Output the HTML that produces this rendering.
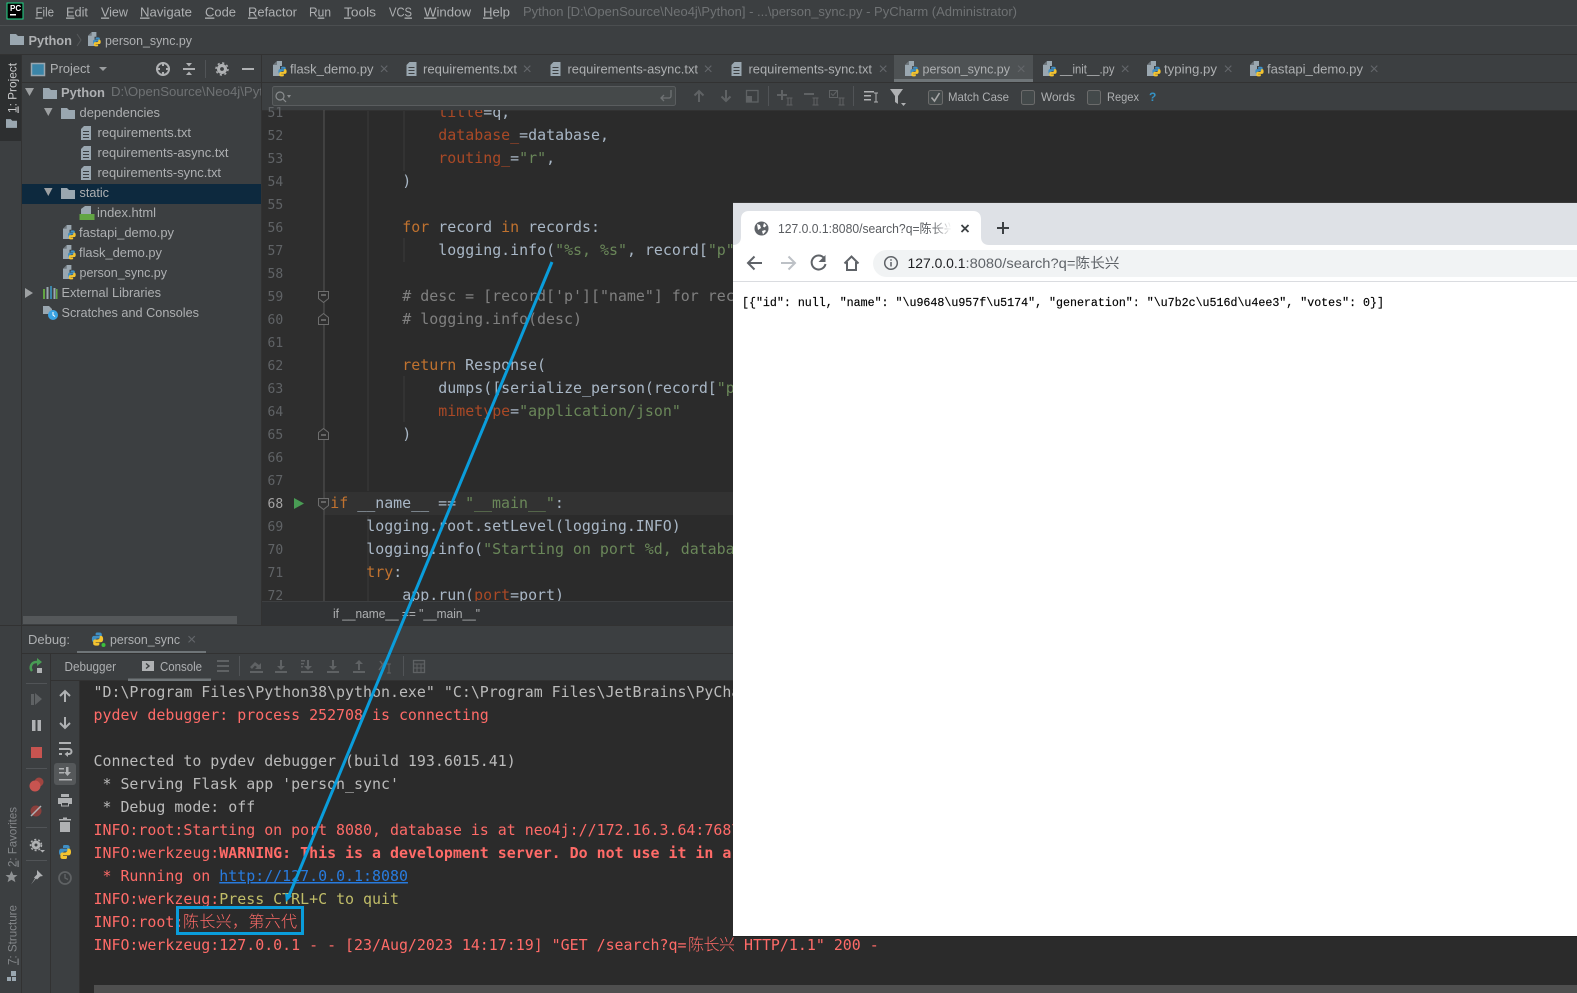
<!DOCTYPE html>
<html lang="en"><head><meta charset="utf-8"><title>PyCharm</title>
<style>
html,body{margin:0;padding:0;background:#3c3f41;width:1577px;height:993px;overflow:hidden}
svg{display:block}
text{white-space:pre}
.u{font:13px "Liberation Sans","Noto Sans CJK SC",sans-serif;fill:#aeb0b2}
.b{font-weight:bold}
.x{font:16px "Liberation Sans",sans-serif;fill:#63666a}
.m{font:14.93px "DejaVu Sans Mono","Liberation Mono","Noto Sans CJK SC",monospace;fill:#a9b7c6}
.n{font:13px "DejaVu Sans Mono","Liberation Mono",monospace;fill:#606366}
.k{fill:#c0722f}.s{fill:#6a8759}.p{fill:#aa4926}.c{fill:#808080}
.w{fill:#bbbbbb}.r{fill:#ff6b68}.y{fill:#c1bd68}.l{fill:#287bde;text-decoration:underline}
.cjk{font:300 16px "Noto Sans CJK SC","WenQuanYi Zen Hei",sans-serif;fill:#ff6b68}
.uu{text-decoration:underline}
.ic{fill:none;stroke:#afb1b3;stroke-width:2}
.dis{fill:none;stroke:#5f6264;stroke-width:2}
</style></head><body>
<svg width="1577" height="993" viewBox="0 0 1577 993" xmlns="http://www.w3.org/2000/svg">
<defs>
<symbol id="py" viewBox="0 0 16 16" overflow="visible"><path fill="#3f8fc4" d="M7.900 1C5.900 1 6 2 6 2.900V4h4v.6H4.400C3.200 4.600 2 5.400 2 8c0 2.600 1.100 3.400 2.200 3.400H5.600V9.700c0-1.200 1-2.200 2.200-2.200h3c1 0 1.800-.8 1.800-1.800V2.900C12.600 1.900 11.800 1 10 1Z"/><path fill="#f4c430" transform="rotate(180 8 8)" d="M7.900 1C5.900 1 6 2 6 2.900V4h4v.6H4.400C3.200 4.600 2 5.400 2 8c0 2.600 1.100 3.400 2.200 3.400H5.600V9.700c0-1.200 1-2.200 2.200-2.200h3c1 0 1.800-.8 1.800-1.800V2.900C12.600 1.900 11.800 1 10 1Z"/></symbol>
<symbol id="pf" viewBox="0 0 15 16" overflow="visible"><path fill="#9aa7b0" d="M0 4L4 0h5v5H7v10H0z"/><path fill="#3c3f41" d="M4 0v4H0z" opacity=".45"/><svg x="4" y="5" width="11" height="11" viewBox="0 0 16 16"><use href="#py" width="16" height="16"/></svg></symbol>
<symbol id="tf" viewBox="0 0 10 14" overflow="visible"><path fill="#9aa7b0" d="M0 3L3 0h7v14H0z"/><path stroke="#3c3f41" stroke-width="1" d="M2 5.500h6M2 8.500h6M2 11.500h6"/></symbol>
<symbol id="fd" viewBox="0 0 14 11" overflow="visible"><path fill="#9aa7b0" d="M0 0h6l2 2h6v9H0z"/></symbol>
</defs>

<!-- base -->
<rect width="1577" height="993" fill="#3c3f41"/>
<rect y="25" width="1577" height="1" fill="#4b4e50"/>
<rect y="54" width="1577" height="1" fill="#323232"/>

<!-- title -->
<rect x="7" y="3" width="16" height="16" fill="#000" stroke="#21d789" stroke-width="1"/>
<text x="10" y="11" style="font:bold 8px 'Liberation Sans',sans-serif;fill:#fff">PC</text><rect x="10" y="14" width="6" height="1.500" fill="#fff"/>
<text class="u" x="35.500" y="16.500" textLength="18.500" lengthAdjust="spacingAndGlyphs"><tspan class="uu">F</tspan>ile</text>
<text class="u" x="66" y="16.500" textLength="22" lengthAdjust="spacingAndGlyphs"><tspan class="uu">E</tspan>dit</text>
<text class="u" x="101" y="16.500" textLength="27" lengthAdjust="spacingAndGlyphs"><tspan class="uu">V</tspan>iew</text>
<text class="u" x="140" y="16.500" textLength="52" lengthAdjust="spacingAndGlyphs"><tspan class="uu">N</tspan>avigate</text>
<text class="u" x="205" y="16.500" textLength="31" lengthAdjust="spacingAndGlyphs"><tspan class="uu">C</tspan>ode</text>
<text class="u" x="248" y="16.500" textLength="49" lengthAdjust="spacingAndGlyphs"><tspan class="uu">R</tspan>efactor</text>
<text class="u" x="309" y="16.500" textLength="22" lengthAdjust="spacingAndGlyphs">R<tspan class="uu">u</tspan>n</text>
<text class="u" x="344" y="16.500" textLength="32" lengthAdjust="spacingAndGlyphs"><tspan class="uu">T</tspan>ools</text>
<text class="u" x="389" y="16.500" textLength="23" lengthAdjust="spacingAndGlyphs">VC<tspan class="uu">S</tspan></text>
<text class="u" x="424" y="16.500" textLength="47" lengthAdjust="spacingAndGlyphs"><tspan class="uu">W</tspan>indow</text>
<text class="u" x="483" y="16.500" textLength="27" lengthAdjust="spacingAndGlyphs"><tspan class="uu">H</tspan>elp</text>
<text class="u" x="523" y="16" textLength="494" lengthAdjust="spacingAndGlyphs" style="fill:#6f7274">Python [D:\OpenSource\Neo4j\Python] - ...\person_sync.py - PyCharm (Administrator)</text>

<!-- nav -->
<use href="#fd" x="10" y="34" width="14" height="11"/>
<text class="u b" x="28.500" y="45" textLength="43.500" lengthAdjust="spacingAndGlyphs">Python</text>
<path d="M77 34l4 6-4 6" fill="none" stroke="#55585a"/>
<use href="#pf" x="88" y="32" width="14" height="15"/>
<text class="u" x="105" y="45" textLength="87" lengthAdjust="spacingAndGlyphs">person_sync.py</text>

<!-- left strip -->
<rect x="0" y="55" width="21" height="86" fill="#2d2f30"/>
<rect x="21" y="55" width="1" height="938" fill="#323232"/>
<text class="u" transform="translate(16.500,113) rotate(-90)" textLength="50" lengthAdjust="spacingAndGlyphs" style="font-size:12px;fill:#c8c9ca"><tspan class="uu">1</tspan>: Project</text>
<use href="#fd" x="6" y="119" width="11" height="9"/>
<text class="u" transform="translate(16.500,867) rotate(-90)" textLength="60" lengthAdjust="spacingAndGlyphs" style="font-size:12px;fill:#84878a"><tspan class="uu">2</tspan>: Favorites</text>
<path fill="#8f9294" d="M11.500 871l1.800 4h4.200l-3.300 2.800 1.200 4.300-3.900-2.400-3.900 2.400 1.200-4.300-3.300-2.800h4.200z"/>
<text class="u" transform="translate(16.500,965) rotate(-90)" textLength="60" lengthAdjust="spacingAndGlyphs" style="font-size:12px;fill:#84878a"><tspan class="uu">7</tspan>: Structure</text>
<path fill="#9aa7b0" d="M11 971h5v5h-5zM7 977h4v4H7zM12 977h4v4h-4z"/>

<!-- project panel -->
<rect x="31.500" y="63.500" width="13" height="12" fill="#3b85a8" stroke="#9aa7b0" stroke-width="1.500"/>
<text class="u" x="50" y="73" textLength="40" lengthAdjust="spacingAndGlyphs">Project</text>
<path fill="#9a9d9f" d="M99 67h8l-4 4z"/>
<circle cx="163" cy="69" r="6" class="ic"/><path class="ic" stroke-width="1.500" d="M163 62v4M163 72v4M156 69h4M166 69h4"/>
<path class="ic" stroke-width="1.500" d="M183 69h12"/><path fill="#afb1b3" d="M186 63h6l-3 3.500zM186 75h6l-3-3.500z"/>
<rect x="205" y="60" width="1" height="18" fill="#515457"/>
<circle cx="222" cy="69" r="3.500" fill="none" stroke="#afb1b3" stroke-width="3.200"/><circle cx="222" cy="69" r="6" fill="none" stroke="#afb1b3" stroke-width="1.500" stroke-dasharray="2.200 2.500"/>
<rect x="242" y="68" width="12" height="2" fill="#afb1b3"/>
<rect x="22" y="82" width="239" height="1" fill="#323232"/>
<rect x="22" y="184" width="239" height="20" fill="#0d293e"/>
<!-- tree -->
<g fill="#9da0a2"><path d="M25 88h9l-4.500 8z"/><path d="M44 108h8.500l-4.200 8z"/><path d="M44 188h8.500l-4.200 8z"/><path d="M25 288l8 5-8 5z"/></g>
<use href="#fd" x="43" y="88" width="14" height="11"/><use href="#fd" x="61" y="108" width="14" height="11"/><use href="#fd" x="61" y="188" width="14" height="11"/>
<use href="#tf" x="81" y="126" width="10" height="14"/><use href="#tf" x="81" y="146" width="10" height="14"/><use href="#tf" x="81" y="166" width="10" height="14"/>
<path fill="#9aa7b0" d="M81 209l4-3h6v8H81z"/><rect x="79.500" y="214" width="15" height="6" fill="#62a543"/>
<use href="#pf" x="63" y="225" width="14" height="15"/><use href="#pf" x="63" y="245" width="14" height="15"/><use href="#pf" x="63" y="265" width="14" height="15"/>
<g><rect x="43" y="289" width="2" height="10" fill="#62a543"/><rect x="46.500" y="287" width="2" height="12" fill="#9aa7b0"/><rect x="50" y="286" width="2" height="13" fill="#3b85a8"/><rect x="53.500" y="288" width="2" height="11" fill="#9aa7b0"/><rect x="56" y="289" width="1.500" height="10" fill="#62a543"/></g>
<path fill="#9aa7b0" d="M43 306h6l3 3v5H43z"/><circle cx="53" cy="315" r="5" fill="#3aa3e3"/><path d="M53 312v3l2 1.500" fill="none" stroke="#fff"/>
<text class="u b" x="61" y="97" textLength="44" lengthAdjust="spacingAndGlyphs">Python</text>
<svg x="0" y="0" width="261" height="120"><text class="u" x="111" y="96" textLength="152" lengthAdjust="spacingAndGlyphs" style="fill:#6f7274">D:\OpenSource\Neo4j\Pyt</text></svg>
<text class="u" x="79.500" y="117" textLength="80.500" lengthAdjust="spacingAndGlyphs">dependencies</text>
<text class="u" x="97.500" y="137" textLength="93.500" lengthAdjust="spacingAndGlyphs">requirements.txt</text>
<text class="u" x="97.500" y="157" textLength="131" lengthAdjust="spacingAndGlyphs">requirements-async.txt</text>
<text class="u" x="97.500" y="177" textLength="123.500" lengthAdjust="spacingAndGlyphs">requirements-sync.txt</text>
<text class="u" x="79.500" y="197" textLength="29.500" lengthAdjust="spacingAndGlyphs">static</text>
<text class="u" x="97" y="217" textLength="59" lengthAdjust="spacingAndGlyphs">index.html</text>
<text class="u" x="79" y="237" textLength="95" lengthAdjust="spacingAndGlyphs">fastapi_demo.py</text>
<text class="u" x="79" y="257" textLength="83" lengthAdjust="spacingAndGlyphs">flask_demo.py</text>
<text class="u" x="79.500" y="277" textLength="87.500" lengthAdjust="spacingAndGlyphs">person_sync.py</text>
<text class="u" x="61.500" y="297" textLength="99.500" lengthAdjust="spacingAndGlyphs">External Libraries</text>
<text class="u" x="61.500" y="317" textLength="137.500" lengthAdjust="spacingAndGlyphs">Scratches and Consoles</text>
<rect x="23" y="616" width="214" height="8" fill="#55585a"/>
<rect x="261" y="55" width="1" height="571" fill="#323232"/>

<!-- tabs -->
<rect x="262" y="82" width="1315" height="1" fill="#323232"/>
<rect x="894" y="55" width="139" height="27" fill="#4e5254"/>
<rect x="894" y="79" width="139" height="3" fill="#6f7578"/>
<use href="#pf" x="273" y="61" width="15" height="16"/>
<text class="u" x="290" y="73.500" textLength="83.500" lengthAdjust="spacingAndGlyphs">flask_demo.py</text><text class="x" x="379.500" y="74">×</text>
<use href="#tf" x="406" y="62" width="11" height="14"/>
<text class="u" x="423" y="73.500" textLength="94" lengthAdjust="spacingAndGlyphs">requirements.txt</text><text class="x" x="522.500" y="74">×</text>
<use href="#tf" x="550" y="62" width="11" height="14"/>
<text class="u" x="567.500" y="73.500" textLength="130.500" lengthAdjust="spacingAndGlyphs">requirements-async.txt</text><text class="x" x="703.500" y="74">×</text>
<use href="#tf" x="731" y="62" width="11" height="14"/>
<text class="u" x="748.500" y="73.500" textLength="123.500" lengthAdjust="spacingAndGlyphs">requirements-sync.txt</text><text class="x" x="878.500" y="74">×</text>
<use href="#pf" x="905" y="61" width="15" height="16"/>
<text class="u" x="922.500" y="73.500" textLength="87.500" lengthAdjust="spacingAndGlyphs">person_sync.py</text><text class="x" x="1016.500" y="74">×</text>
<use href="#pf" x="1043" y="61" width="15" height="16"/>
<text class="u" x="1060" y="73.500" textLength="54.500" lengthAdjust="spacingAndGlyphs">__init__.py</text><text class="x" x="1120.500" y="74">×</text>
<use href="#pf" x="1147" y="61" width="15" height="16"/>
<text class="u" x="1164" y="73.500" textLength="53" lengthAdjust="spacingAndGlyphs">typing.py</text><text class="x" x="1223.500" y="74">×</text>
<use href="#pf" x="1250" y="61" width="15" height="16"/>
<text class="u" x="1267" y="73.500" textLength="96" lengthAdjust="spacingAndGlyphs">fastapi_demo.py</text><text class="x" x="1369.500" y="74">×</text>

<!-- find bar -->
<rect x="272.500" y="86.500" width="403" height="19" rx="2" fill="#45494a" stroke="#5a5d5f"/>
<circle cx="280" cy="96" r="4" fill="none" stroke="#8a8d8f" stroke-width="1.200"/><path d="M283 99l3 3" stroke="#8a8d8f" stroke-width="1.200"/><path fill="#8a8d8f" d="M287 95h4l-2 3z"/>
<path fill="none" stroke="#6f7274" stroke-width="1.300" d="M671 90v6a2 2 0 0 1-2 2h-8M664 95l-3 3 3 3"/>
<path class="dis" d="M699 102V91M694.500 95.500l4.500-4.500 4.500 4.500M726 90v11M721.500 96.500l4.500 4.500 4.500-4.500"/>
<rect x="746.500" y="90.500" width="11.500" height="11.500" fill="none" stroke="#5f6264" stroke-width="1.300"/><rect x="746.500" y="96" width="5.500" height="6" fill="#5f6264"/>
<rect x="768" y="86" width="1" height="20" fill="#515457"/>
<path class="dis" d="M782 90v10M777 95h10"/><path d="M788 98v7M791 98v7M814 98v7M817 98v7M840 98v7M843 98v7M786.500 98h6M786.500 105h6M812.500 98h6M812.500 105h6M838.500 98h6M838.500 105h6" stroke="#5f6264" fill="none"/>
<rect x="804" y="93" width="10" height="2" fill="#5f6264"/>
<rect x="829.500" y="90.500" width="8" height="7" fill="none" stroke="#5f6264"/><path d="M831 93.500l2 2 4.500-5" fill="none" stroke="#5f6264"/>
<rect x="853" y="86" width="1" height="20" fill="#515457"/>
<path d="M864 91h10v1.500h-10zM864 95h7v1.500h-7zM864 99h7v1.500h-7z" fill="#afb1b3"/><path d="M876 93v9M874 93h4M874 102h4" stroke="#afb1b3" fill="none"/>
<path fill="#afb1b3" d="M890 89h13l-5 7v8l-3-2v-6z"/><path fill="#afb1b3" d="M901 103h5l-2.500 3z"/>
<rect x="928.500" y="90.500" width="14" height="14" rx="2" fill="#43494a" stroke="#6b6b6b"/><path d="M931.500 97.500l3 3.500 5-8" fill="none" stroke="#a7a7a7" stroke-width="1.600"/>
<text class="u" x="948" y="101" textLength="61" lengthAdjust="spacingAndGlyphs" style="font-size:12px">Match Case</text>
<rect x="1021.500" y="90.500" width="13" height="14" rx="2" fill="#43494a" stroke="#6b6b6b"/>
<text class="u" x="1041" y="101" textLength="34" lengthAdjust="spacingAndGlyphs" style="font-size:12px">Words</text>
<rect x="1087.500" y="90.500" width="13" height="14" rx="2" fill="#43494a" stroke="#6b6b6b"/>
<text class="u" x="1107" y="101" textLength="32" lengthAdjust="spacingAndGlyphs" style="font-size:12px">Regex</text>
<text x="1149" y="101" style="font:bold 12px 'Liberation Sans',sans-serif;fill:#3592c4">?</text>

<!-- editor -->
<rect x="262" y="110" width="1315" height="492" fill="#2b2b2b"/>
<rect x="262" y="110" width="62" height="492" fill="#2e2e2e"/>
<rect x="262" y="110" width="1315" height="1" fill="#323232"/>
<rect x="324" y="492" width="409" height="23" fill="#323232"/>
<rect x="323.500" y="110" width="1" height="492" fill="#555"/>
<g fill="#3b3b3b">
<rect x="367.500" y="111" width="1" height="380"/><rect x="367.500" y="516" width="1" height="86"/>
<rect x="403.500" y="111" width="1" height="60"/><rect x="403.500" y="238" width="1" height="24"/><rect x="403.500" y="376" width="1" height="46"/>
</g>
<g fill="#2e2e2e" stroke="#6d6d6d">
<path d="M318.500 291.500h10v7l-5 4-5-4z"/><path d="M318.500 324.500h10v-7l-5-4-5 4z"/><path d="M318.500 439.500h10v-7l-5-4-5 4z"/><path fill="#323232" d="M318.500 498.500h10v7l-5 4-5-4z"/>
</g>
<path stroke="#9a9a9a" d="M321 295h5M321 320h5M321 435h5M321 502h5"/>
<path fill="#499c54" d="M294 498l10 5.500-10 5.500z"/>
<text class="n" x="267.500" y="117">51</text><text class="n" x="267.500" y="140">52</text><text class="n" x="267.500" y="163">53</text><text class="n" x="267.500" y="186">54</text><text class="n" x="267.500" y="209">55</text><text class="n" x="267.500" y="232">56</text><text class="n" x="267.500" y="255">57</text><text class="n" x="267.500" y="278">58</text><text class="n" x="267.500" y="301">59</text><text class="n" x="267.500" y="324">60</text><text class="n" x="267.500" y="347">61</text><text class="n" x="267.500" y="370">62</text><text class="n" x="267.500" y="393">63</text><text class="n" x="267.500" y="416">64</text><text class="n" x="267.500" y="439">65</text><text class="n" x="267.500" y="462">66</text><text class="n" x="267.500" y="485">67</text><text class="n" x="267.500" y="508" style="fill:#a4a3a3">68</text><text class="n" x="267.500" y="531">69</text><text class="n" x="267.500" y="554">70</text><text class="n" x="267.500" y="577">71</text><text class="n" x="267.500" y="600">72</text>
<svg x="262" y="110" width="471" height="492" viewBox="262 110 471 492">
<text class="m" x="438.300" y="117"><tspan class="p">title</tspan>=q,</text>
<text class="m" x="438.300" y="140"><tspan class="p">database_</tspan>=database,</text>
<text class="m" x="438.300" y="163"><tspan class="p">routing_</tspan>=<tspan class="s">"r"</tspan>,</text>
<text class="m" x="402.300" y="186">)</text>
<text class="m" x="402.300" y="232"><tspan class="k">for</tspan> record <tspan class="k">in</tspan> records:</text>
<text class="m" x="438.300" y="255">logging.info(<tspan class="s">"%s, %s"</tspan>, record[<tspan class="s">"p"</tspan>]["name"], record["p"])</text>
<text class="m" x="402.300" y="301" style="fill:#808080"># desc = [record['p']["name"] for record in records]</text>
<text class="m" x="402.300" y="324" style="fill:#808080"># logging.info(desc)</text>
<text class="m" x="402.300" y="370"><tspan class="k">return</tspan> Response(</text>
<text class="m" x="438.300" y="393">dumps([serialize_person(record[<tspan class="s">"p"</tspan>]) for record in records]),</text>
<text class="m" x="438.300" y="416"><tspan class="p">mimetype</tspan>=<tspan class="s">"application/json"</tspan></text>
<text class="m" x="402.300" y="439">)</text>
<text class="m" x="330.300" y="508"><tspan class="k">if</tspan> __name__ == <tspan class="s">"__main__"</tspan>:</text>
<text class="m" x="366.300" y="531">logging.root.setLevel(logging.INFO)</text>
<text class="m" x="366.300" y="554">logging.info(<tspan class="s">"Starting on port %d, database is at %s"</tspan>, port, url)</text>
<text class="m" x="366.300" y="577"><tspan class="k">try</tspan>:</text>
<text class="m" x="402.300" y="600">app.run(<tspan class="p">port</tspan>=port)</text>
</svg>
<!-- breadcrumb -->
<rect x="262" y="601" width="1315" height="24" fill="#313335"/>
<rect x="262" y="601" width="1315" height="1" fill="#3d3f41"/>
<text class="u" x="333" y="618" textLength="147" lengthAdjust="spacingAndGlyphs">if __name__ == "__main__"</text>
<rect x="0" y="625" width="1577" height="1" fill="#323232"/>

<!-- debug header -->
<text class="u" x="28" y="644" textLength="42" lengthAdjust="spacingAndGlyphs">Debug:</text>
<svg x="90" y="631.500" width="15" height="15" viewBox="0 0 16 16"><use href="#py" width="16" height="16"/></svg><circle cx="103.500" cy="645" r="2" fill="#3cc13c"/>
<text class="u" x="110" y="644" textLength="70" lengthAdjust="spacingAndGlyphs">person_sync</text>
<text class="x" x="187" y="644.500">×</text>
<rect x="77" y="651" width="129" height="2.500" fill="#6f7578"/>
<rect x="22" y="653" width="1555" height="1" fill="#323232"/>
<rect x="50" y="654" width="1" height="339" fill="#323232"/>
<rect x="79" y="681" width="1" height="312" fill="#323232"/>
<rect x="51" y="680" width="1526" height="1" fill="#323232"/>
<!-- debugger tabs -->
<text class="u" x="64.500" y="671" textLength="51.500" lengthAdjust="spacingAndGlyphs">Debugger</text>
<rect x="142" y="661" width="12" height="10" fill="#afb1b3"/><path d="M146 663.500l3 2.500-3 2.500" fill="none" stroke="#3c3f41" stroke-width="1.400"/>
<text class="u" x="160" y="671" textLength="42" lengthAdjust="spacingAndGlyphs">Console</text>
<rect x="128" y="678.500" width="83" height="2.500" fill="#6f7578"/>
<g transform="translate(0,-1)">
<path fill="#5f6264" d="M217 661h12v2h-12zM217 666h12v2h-12zM217 671h12v2h-12z"/>
<rect x="239" y="657" width="1" height="20" fill="#515457"/>
<g fill="#5f6264">
<path d="M250 672h13v2h-13z"/><path d="M250 668l5-5 4 3 2-2v6h-6l2-2-2-1.500-3 3.500z"/>
<path d="M275 672h12v2h-12zM280 661h2v6h3l-4 4-4-4h3z"/>
<path d="M301 672h12v2h-12zM307 661h2v6h3l-4 4-4-4h3zM301 661h4v1.500h-4zM301 664h3v1.500h-3zM301 667h2v1.500h-2z"/>
<path d="M327 672h12v2h-12zM332 661h2v6h3l-4 4-4-4h3z"/>
<path d="M353 672h12v2h-12zM358 671h2v-6h3l-4-4-4 4h3z"/>
<path d="M380 662l5 7M386 661l-7 10" stroke="#5f6264" stroke-width="1.500" fill="none"/><path d="M389 665v9M387 665h4M387 674h4" stroke="#5f6264" fill="none"/>
</g>
<rect x="403" y="657" width="1" height="20" fill="#515457"/>
<rect x="413.500" y="661.500" width="11" height="12" fill="none" stroke="#5f6264" stroke-width="1.300"/><path d="M413 665h12M417 665v8M421 665v8M413 669h12" stroke="#5f6264" fill="none"/>
</g>

<!-- debugger left -->
<path fill="none" stroke="#499c54" stroke-width="2.500" d="M38 662h-2a5.500 5.500 0 0 0-4 9"/><path fill="#499c54" d="M37 658l5 4-5 4z"/><rect x="37" y="668" width="5" height="5" fill="#afb1b3"/>
<g fill="#515457"><rect x="26" y="683" width="21" height="1"/><rect x="26" y="768" width="21" height="1"/><rect x="26" y="827" width="21" height="1"/><rect x="26" y="860" width="21" height="1"/></g>
<rect x="31" y="694" width="3" height="11" fill="#5f6264"/><path fill="#5f6264" d="M35 693l7 6-7 6z"/>
<path fill="#afb1b3" d="M32 720h3.500v11H32zM37.500 720H41v11h-3.500z"/>
<rect x="31" y="747" width="11" height="11" fill="#c75450"/>
<circle cx="39" cy="782" r="4.500" fill="#a04540"/><circle cx="35" cy="786" r="5.500" fill="#c75450"/>
<circle cx="36" cy="811" r="5.500" fill="#8b3f3c"/><path d="M31 816l10-10" stroke="#afb1b3" stroke-width="1.500"/>
<circle cx="36" cy="845" r="3" fill="none" stroke="#afb1b3" stroke-width="3"/><circle cx="36" cy="845" r="5.500" fill="none" stroke="#afb1b3" stroke-width="1.500" stroke-dasharray="2 2"/><path fill="#afb1b3" d="M40 850h5l-2.500 2.500z"/>
<path fill="#afb1b3" d="M37 870l6 6-3 .5-3 3-1-1-5 6 4-6-1-1 3-3z"/>
<!-- debugger second bar -->
<rect x="54" y="763" width="22" height="22" rx="3" fill="#55585a"/>
<path class="ic" d="M65 702v-10M60 696l5-5 5 5M65 717v10M60 723l5 5 5-5"/>
<path class="ic" stroke-width="1.800" d="M59 743h12M59 749h10a2.500 2.500 0 0 1 0 5h-3M59 754h3"/><path fill="#afb1b3" d="M68 751.500l-3.500 2.500 3.500 3z"/>
<path fill="#afb1b3" d="M59 768h5v1.500h-5zM59 772h5v1.500h-5zM59 779h13v1.500H59zM66 767h2.500v5H71l-3.500 4-3.500-4h2z"/>
<path fill="#afb1b3" d="M61 794h8v3h-8zM58 798h14v6h-3v-2h-8v2h-3z"/><rect x="61.500" y="802.500" width="7" height="3.500" fill="none" stroke="#afb1b3"/>
<path fill="#afb1b3" d="M60 822h10v10H60zM59 819h12v1.500H59zM63 817.500h4V819h-4z"/>
<svg x="57" y="844" width="16" height="16" viewBox="0 0 16 16"><use href="#py" width="16" height="16"/></svg>
<circle cx="65" cy="878" r="6" fill="none" stroke="#5f6264" stroke-width="1.700"/><path d="M65 874v4l3 1.500" fill="none" stroke="#5f6264" stroke-width="1.400"/>

<!-- console -->
<rect x="80" y="681" width="1497" height="312" fill="#2b2b2b"/>
<svg x="80" y="681" width="660" height="304" viewBox="80 681 660 304">
<text class="m w" x="93.500" y="697">"D:\Program Files\Python38\python.exe" "C:\Program Files\JetBrains\PyCharm 2019.3.3\helpers"</text>
<text class="m r" x="93.500" y="720">pydev debugger: process 252708 is connecting</text>
<text class="m w" x="93.500" y="766">Connected to pydev debugger (build 193.6015.41)</text>
<text class="m w" x="93.500" y="789"> * Serving Flask app 'person_sync'</text>
<text class="m w" x="93.500" y="812"> * Debug mode: off</text>
<text class="m r" x="93.500" y="835">INFO:root:Starting on port 8080, database is at neo4j://172.16.3.64:7687</text>
<text class="m r" x="93.500" y="858">INFO:werkzeug:<tspan class="b">WARNING: This is a development server. Do not use it in a production</tspan></text>
<text class="m r" x="93.500" y="881"> * Running on <tspan class="l">http://127.0.0.1:8080</tspan></text>
<text class="m r" x="93.500" y="904">INFO:werkzeug:<tspan class="y">Press CTRL+C to quit</tspan></text>
<text class="m r" x="93.500" y="927">INFO:root:</text>
<text class="cjk" x="183" y="927" textLength="114">陈长兴，第六代</text>
<text class="m r" x="93.500" y="950">INFO:werkzeug:127.0.0.1 - - [23/Aug/2023 14:17:19] "GET /search?q=</text>
<text class="cjk" x="688" y="950" textLength="47">陈长兴</text>
</svg>
<text class="m r" x="735" y="950"> HTTP/1.1" 200 -</text>
<rect x="94" y="985" width="1483" height="8" fill="#4f4f4f"/>

<!-- browser -->
<rect x="733" y="202" width="844" height="734" fill="#fff"/>
<rect x="733" y="202" width="844" height="1" fill="#3a3a3a"/>
<rect x="733" y="203" width="844" height="42" fill="#dee1e6"/>
<path fill="#fff" d="M733 245c4 0 8-2 8-8v-18c0-5 3-8 8-8h224c5 0 8 3 8 8v18c0 6 4 8 8 8z"/>
<rect x="733" y="245" width="844" height="36" fill="#fff"/>
<rect x="733" y="281" width="844" height="1" fill="#dadce0"/>
<rect x="733" y="936" width="844" height="1" fill="#222"/>
<circle cx="761.500" cy="228.500" r="7" fill="#5f6368"/><path d="M757 224l3 1 1 3-3 2zM764 223l2.500 2.500-2 2-1.500-1zM762 231l3-1 1 1-3 3.500z" fill="#fff"/>
<text x="778" y="233" textLength="178" lengthAdjust="spacingAndGlyphs" style="font:12.500px 'Liberation Sans','Noto Sans CJK SC',sans-serif;fill:#5a5d61">127.0.0.1:8080/search?q=陈长兴</text>
<linearGradient id="fa"><stop offset="0" stop-color="#fff" stop-opacity="0"/><stop offset="1" stop-color="#fff"/></linearGradient>
<rect x="932" y="220" width="20" height="18" fill="url(#fa)"/><rect x="951" y="220" width="8" height="18" fill="#fff"/>
<path d="M961.500 225l7 7M968.500 225l-7 7" stroke="#3c4043" stroke-width="1.800" fill="none"/>
<path d="M1003 222v12M997 228h12" stroke="#3c4043" stroke-width="2" fill="none"/>
<path d="M762 263h-14M754.500 256.500l-6.500 6.500 6.500 6.500" fill="none" stroke="#5f6368" stroke-width="2"/>
<path d="M781 263h14M788.500 256.500l6.500 6.500-6.500 6.500" fill="none" stroke="#bdc1c6" stroke-width="2"/>
<path d="M824 258a7 7 0 1 0 1.500 6" fill="none" stroke="#5f6368" stroke-width="2"/><path fill="#5f6368" d="M825.500 255v7h-7z"/>
<path d="M844.500 263.500l7-7 7 7M847 262v8h9v-8" fill="none" stroke="#5f6368" stroke-width="2"/>
<rect x="873" y="250" width="720" height="27" rx="13.500" fill="#f1f3f4"/>
<circle cx="891" cy="263" r="6.300" fill="none" stroke="#5f6368" stroke-width="1.500"/><path d="M891 262v4.500M891 259.200v1.600" stroke="#5f6368" stroke-width="1.500"/>
<text x="907.500" y="268" textLength="58" lengthAdjust="spacingAndGlyphs" style="font:14px 'Liberation Sans',sans-serif;fill:#202124">127.0.0.1</text>
<text x="965.500" y="268" textLength="154" lengthAdjust="spacingAndGlyphs" style="font:14px 'Liberation Sans','Noto Sans CJK SC',sans-serif;fill:#5f6368">:8080/search?q=陈长兴</text>
<text x="742" y="306" textLength="642" style="font:11.650px 'Liberation Mono',monospace;fill:#000;stroke:#000;stroke-width:.15">[{"id": null, "name": "\u9648\u957f\u5174", "generation": "\u7b2c\u516d\u4ee3", "votes": 0}]</text>

<!-- annotations -->
<path d="M552 262L288 898" stroke="#0a9ddb" stroke-width="3" fill="none"/>
<path d="M286 902l-1-9 7 3z" fill="#0a9ddb"/>
<rect x="177.500" y="907.500" width="125" height="26" fill="none" stroke="#0a9ddb" stroke-width="3"/>
</svg>
</body></html>
